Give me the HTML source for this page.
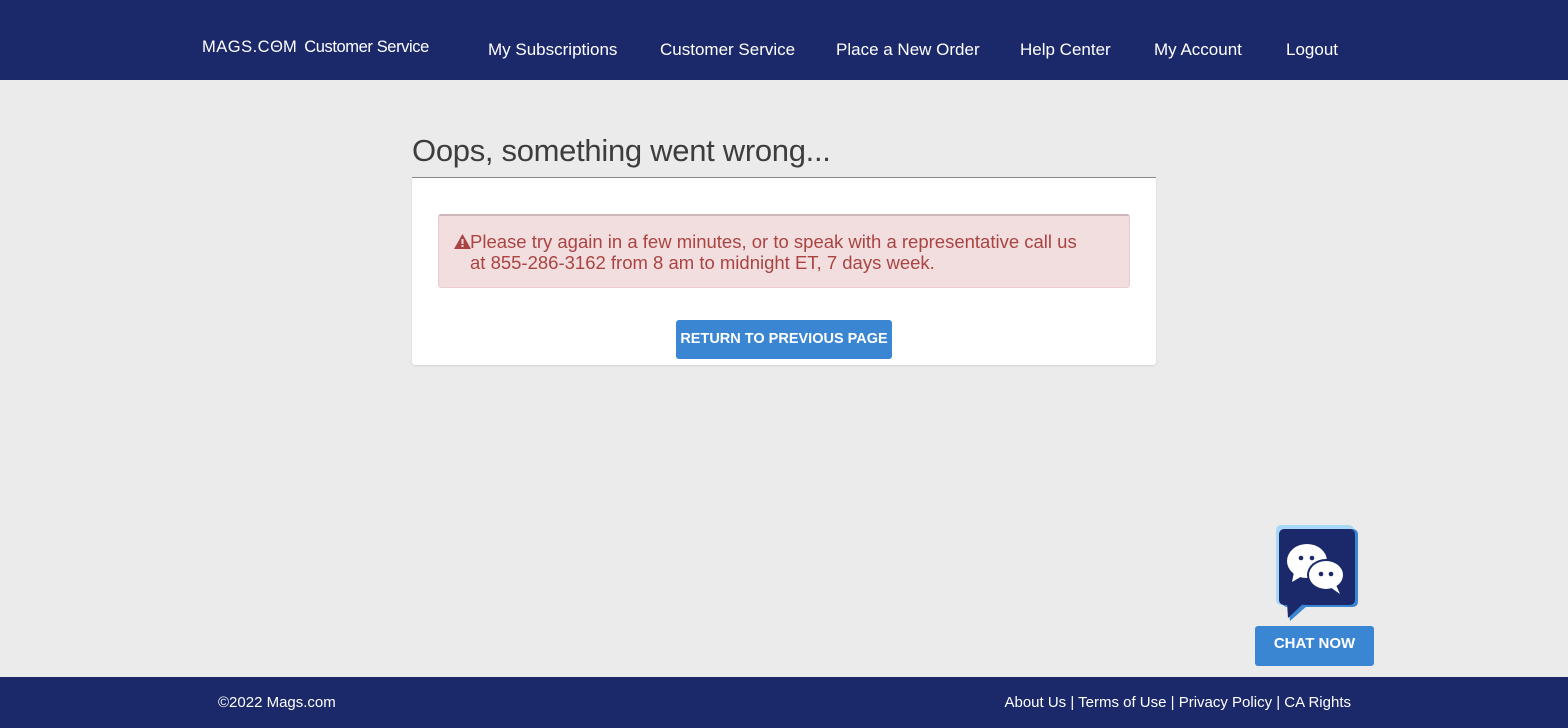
<!DOCTYPE html>
<html><head><meta charset="utf-8"><style>
*{margin:0;padding:0;box-sizing:border-box}
body{width:1568px;height:728px;background:#ebebeb;font-family:"Liberation Sans",sans-serif;position:relative;overflow:hidden}
.hdr{position:absolute;left:0;top:0;width:1568px;height:80px;background:#1b296a;color:#fff}
.logo{position:absolute;left:202px;top:38px;font-size:16.5px;letter-spacing:0.5px}
.logo span{font-size:16.5px;letter-spacing:-0.4px;margin-left:7px}
.nav{position:absolute;top:40px;font-size:17px;white-space:nowrap}
h1{position:absolute;left:412px;top:133px;font-size:31px;font-weight:normal;color:#3d3d3d;letter-spacing:-0.3px}
.card{position:absolute;left:412px;top:177px;width:744px;height:188px;background:#fff;border-top:1px solid #888;border-radius:0 0 3px 3px;box-shadow:0 1px 2px rgba(0,0,0,.1)}
.alert{position:absolute;left:26px;top:36px;width:692px;height:74px;background:#f2dede;border:1px solid #ebccd1;border-top:2px solid #cdb5b8;border-radius:3px;color:#a94442;font-size:18.5px;line-height:21px;padding:15px 40px 0 31px}
.alert svg{position:absolute;left:15px;top:18px}
.btn{position:absolute;left:264px;top:142px;width:216px;height:39px;background:#3a86d3;border-radius:3px;color:#fff;font-weight:bold;font-size:14.5px;text-align:center;line-height:39px}
.chatbtn{position:absolute;left:1255px;top:626px;width:119px;height:40px;background:#3a86d3;border-radius:3px;color:#fff;font-weight:bold;font-size:15px;text-align:center;line-height:36px}
.ftr{position:absolute;left:0;top:677px;width:1568px;height:51px;background:#1b296a;color:#fff;font-size:15px}
</style></head><body>
<div class="hdr">
<div class="logo">MAGS.C<span style="margin:0;letter-spacing:0">Θ</span>M<span>Customer Service</span></div>
<div class="nav" style="left:488px">My Subscriptions</div>
<div class="nav" style="left:660px">Customer Service</div>
<div class="nav" style="left:836px">Place a New Order</div>
<div class="nav" style="left:1020px">Help Center</div>
<div class="nav" style="left:1154px">My Account</div>
<div class="nav" style="left:1286px">Logout</div>
</div>
<h1>Oops, something went wrong...</h1>
<div class="card">
<div class="alert"><svg width="17" height="15" viewBox="0 0 17 15"><path d="M8.5 0L17 15H0Z" fill="#a94442"/><rect x="7.5" y="5" width="2" height="5" fill="#f2dede"/><rect x="7.5" y="11" width="2" height="2" fill="#f2dede"/></svg>Please try again in a few minutes, or to speak with a representative call us at 855-286-3162 from 8 am to midnight ET, 7 days week.</div>
<div class="btn">RETURN TO PREVIOUS PAGE</div>
</div>
<svg style="position:absolute;left:1274px;top:524px" width="86" height="98" viewBox="0 0 86 98">
<rect x="2" y="1" width="78" height="80" rx="5" fill="#a8d8f5"/>
<rect x="8" y="5" width="76" height="78" rx="5" fill="#3a86d3"/>
<rect x="5" y="5" width="76" height="76" rx="5" fill="#1b296a"/>
<path d="M14 80 L16 97 L34 81Z" fill="#3a86d3"/>
<path d="M13 78 L14 94 L30 79Z" fill="#1b296a"/>
<ellipse cx="33" cy="37" rx="20" ry="17" fill="#fff"/>
<path d="M20 48 L18 58 L30 51Z" fill="#fff"/>
<ellipse cx="52" cy="51" rx="19" ry="16" fill="#1b296a"/>
<ellipse cx="52" cy="51" rx="17" ry="14" fill="#fff"/>
<path d="M62 61 L66 70 L56 63Z" fill="#fff"/>
<circle cx="27" cy="34" r="2.3" fill="#1b296a"/><circle cx="38" cy="34" r="2.3" fill="#1b296a"/>
<circle cx="47" cy="50" r="2.3" fill="#1b296a"/><circle cx="57" cy="50" r="2.3" fill="#1b296a"/>
</svg>
<div class="chatbtn">CHAT NOW</div>
<div class="ftr">
<div style="position:absolute;left:218px;top:17px">©2022 Mags.com</div>
<div style="position:absolute;right:217px;top:17px">About Us | Terms of Use | Privacy Policy | CA Rights</div>
</div>
</body></html>
